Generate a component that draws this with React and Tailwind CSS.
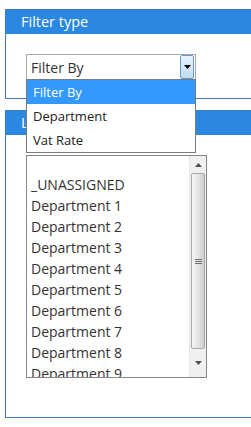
import React from 'react';

const departments = ['', '_UNASSIGNED', 'Department 1', 'Department 2', 'Department 3', 'Department 4', 'Department 5', 'Department 6', 'Department 7', 'Department 8', 'Department 9'];
const filterOptions = ['Filter By', 'Department', 'Vat Rate'];

function Panel({ title, className, children }) {
  return (
    <section className={`ml-[5px] w-[260px] border border-[#3d7cc0] ${className}`}>
      <h2 className="h-[24px] bg-[#2b88e0] pl-[15px] text-[14.5px] leading-[24px] text-white">{title}</h2>
      {children}
    </section>
  );
}

function ScrollBar() {
  return (
    <div className="flex w-[17px] flex-col border-l border-[#e6e6e6] bg-[#f0f0f0]">
      <div className="flex h-[17px] items-center justify-center">
        <svg width="7" height="4" viewBox="0 0 7 4"><path d="M0 4 L3.5 0 L7 4 Z" fill="#505050" /></svg>
      </div>
      <div className="mx-[1px] flex h-[176px] items-center justify-center rounded-[2px] border border-[#a8a8a8] bg-gradient-to-r from-[#f4f4f4] via-[#e4e4e4] to-[#cfcfcf]">
        <div className="flex flex-col gap-[1px]">
          <div className="h-px w-[7px] bg-[#707070]" />
          <div className="h-px w-[7px] bg-[#707070]" />
          <div className="h-px w-[7px] bg-[#707070]" />
        </div>
      </div>
      <div className="flex flex-1 items-center justify-center">
        <svg width="7" height="4" viewBox="0 0 7 4"><path d="M0 0 L3.5 4 L7 0 Z" fill="#505050" /></svg>
      </div>
    </div>
  );
}

export default function App() {
  return (
    <div className="relative h-[427px] w-[251px] overflow-hidden bg-white pt-[9px] font-['Open_Sans',sans-serif]">
      <Panel title="Filter type" className="h-[90px]">
        <div className="ml-[20px] mt-[20px] flex h-[26px] w-[170px] items-center border border-[#a9a9a9] bg-white">
          <span className="flex-1 pl-[4px] text-[14px] text-[#333]">Filter By</span>
          <div className="mr-[1px] flex h-[24px] w-[14px] items-center justify-center rounded-[2px] border border-[#6a9ac8] bg-gradient-to-b from-[#eaf4fc] to-[#bfdcf4]">
            <svg width="7" height="4" viewBox="0 0 7 4"><path d="M0 0 L3.5 4 L7 0 Z" fill="#000" /></svg>
          </div>
        </div>
      </Panel>

      <Panel title="List" className="mt-[11px] h-[308px]">
        <div className="ml-[20px] mt-[20px] flex h-[223px] w-[181px] border border-[#828790] bg-white">
          <ul className="flex-1 overflow-hidden pl-[4px] text-[14px] leading-[21px] text-[#333]">
            {departments.map((d, i) => (
              <li key={i} className={`whitespace-nowrap ${i === 0 ? 'h-[18px]' : 'h-[21px]'}`}>{d}</li>
            ))}
          </ul>
          <ScrollBar />
        </div>
      </Panel>

      <ul className="absolute left-[26px] top-[79px] w-[170px] border border-[#7a7a7a] bg-white text-[13px] text-[#222]">
        {filterOptions.map((o, i) => (
          <li key={o} className={`h-[24px] pl-[6px] leading-[24px] ${i === 0 ? 'bg-[#3399ff] text-white' : ''}`}>{o}</li>
        ))}
      </ul>
    </div>
  );
}
